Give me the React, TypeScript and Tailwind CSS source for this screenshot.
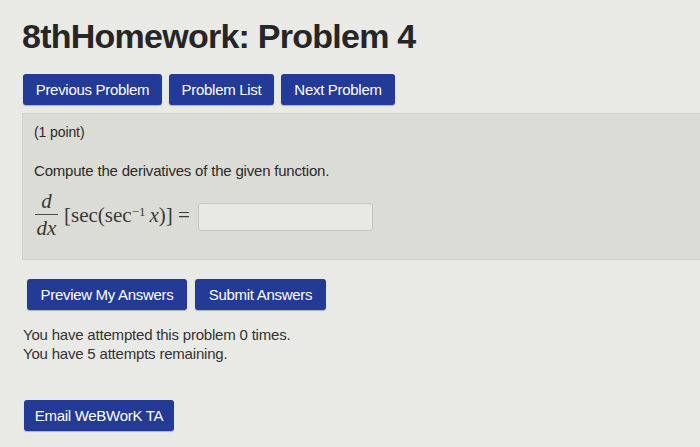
import React from 'react'

function Btn({ children, className = '' }: { children: React.ReactNode; className?: string }) {
  return (
    <button
      type="button"
      className={`h-[31px] whitespace-nowrap rounded-[3px] bg-[#233a97] px-[10px] text-[15px] leading-none tracking-[-0.3px] text-white shadow-[0_1px_1px_rgba(0,0,0,0.25)] ${className}`}
    >
      {children}
    </button>
  )
}

export default function App() {
  return (
    <div
      className="h-[447px] w-[700px] overflow-hidden bg-[#e9e9e5] text-[#2a2a2a]"
      style={{ fontFamily: '"Liberation Sans", Arial, sans-serif' }}
    >
      <h1 className="ml-[22px] pt-[17px] text-[34px] font-bold leading-[38px] tracking-[-0.75px] text-[#262626]">
        8thHomework: Problem 4
      </h1>

      <div className="ml-[23px] mt-[19px] flex gap-[7px]">
        <Btn className="w-[139px]">Previous Problem</Btn>
        <Btn className="w-[105px]">Problem List</Btn>
        <Btn className="w-[114px]">Next Problem</Btn>
      </div>

      <div className="ml-[22px] mt-[8px] h-[147px] border border-r-0 border-[#d0d0ca] bg-[#dcdcd6] pl-[11px] pt-[9px]">
        <p className="text-[14px] leading-[18px] tracking-[-0.1px]">(1 point)</p>
        <p className="mt-[20px] text-[15px] leading-[20px] tracking-[-0.2px]">
          Compute the derivatives of the given function.
        </p>
        <div
          className="mt-[7px] flex items-center text-[#3a3a3a]"
          style={{ fontFamily: '"Liberation Serif", "Times New Roman", serif' }}
        >
          <div className="flex w-[25px] flex-col items-center text-[21px] leading-[26px]">
            <span className="italic">d</span>
            <span className="h-px w-[23px] bg-[#4a4a4a]" />
            <span className="italic">dx</span>
          </div>
          <span className="ml-[5px] mt-[3px] whitespace-nowrap text-[21px]">
            [sec(sec<sup className="text-[13px]">−1</sup>
            <span className="ml-[4px] italic">x</span>)] =
          </span>
          <div className="ml-[8px] mt-[4px] h-[28px] w-[175px] rounded-[3px] border border-[#c6c6c2] bg-[#e8e8e5]" />
        </div>
      </div>

      <div className="ml-[27px] mt-[19px] flex gap-[8px]">
        <Btn className="w-[160px]">Preview My Answers</Btn>
        <Btn className="w-[131px]">Submit Answers</Btn>
      </div>

      <div className="ml-[23px] mt-[15px] text-[15px] leading-[19px] tracking-[-0.2px] text-[#333]">
        <p>You have attempted this problem 0 times.</p>
        <p>You have 5 attempts remaining.</p>
      </div>

      <div className="ml-[24px] mt-[37px]">
        <Btn className="w-[150px]">Email WeBWorK TA</Btn>
      </div>
    </div>
  )
}
